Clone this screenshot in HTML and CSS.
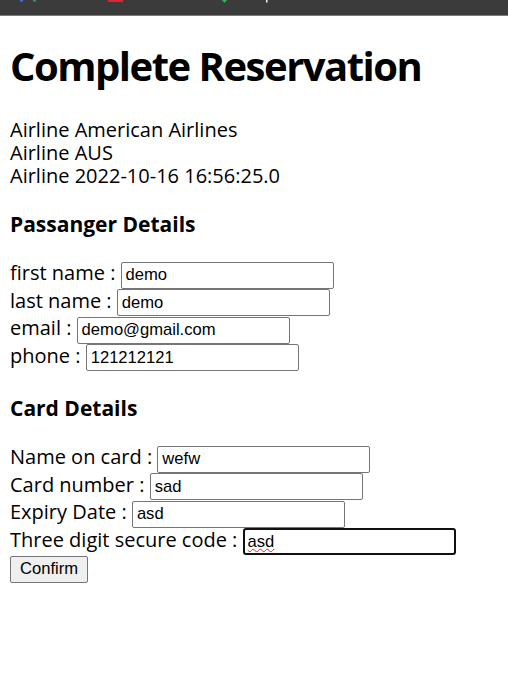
FILE: index.html
```html
<!DOCTYPE html>
<html lang="en">
<head>
<meta charset="utf-8">
<title>Complete Reservation</title>
<link rel="stylesheet" href="styles.css">
</head>
<body>
<div class="topbar">
  <svg class="topbar-icons" width="508" height="15" viewBox="0 0 508 15">
    <rect x="20" y="0" width="3" height="1.5" fill="#3b78d8"/>
    <rect x="33" y="0" width="3" height="1.5" fill="#2e9e48"/>
    <rect x="108" y="0" width="15" height="2" fill="#e0262a"/>
    <path d="M222 0 L227 0 L224.5 3 Z" fill="#34b255"/>
    <rect x="266" y="0" width="1.5" height="2.5" fill="#f2f2f2"/>
  </svg>
</div>
<main class="page">
  <h1 class="title">Complete Reservation</h1>
  <p class="flight">Airline American Airlines
Airline AUS
Airline 2022-10-16 16:56:25.0</p>
  <form class="form">
    <h3 class="section-title">Passanger Details</h3>
    <div class="row">first name : <input class="field" type="text" value="demo"></div>
    <div class="row">last name : <input class="field" type="text" value="demo"></div>
    <div class="row">email : <input class="field" type="text" value="demo@gmail.com"></div>
    <div class="row">phone : <input class="field" type="text" value="121212121"></div>

    <h3 class="section-title">Card Details</h3>
    <div class="row">Name on card : <input class="field" type="text" value="wefw"></div>
    <div class="row">Card number : <input class="field" type="text" value="sad"></div>
    <div class="row">Expiry Date : <input class="field" type="text" value="asd"></div>
    <div class="row">Three digit secure code : <span class="field field-focus"><span class="misspelled">asd</span></span></div>
    <button class="confirm" type="button">Confirm</button>
  </form>
</main>
</body>
</html>
```
FILE: styles.css
```css
html, body {
  margin: 0;
  padding: 0;
  background: #ffffff;
}

body {
  font-family: "Open Sans", "Noto Sans", sans-serif;
  font-size: 20px;
  line-height: 23px;
  color: #000000;
}

.topbar {
  height: 15px;
  background: #3b3b3b;
  border-bottom: 1px solid #7c7c7c;
}

.topbar-icons {
  display: block;
}

.page {
  padding: 0 10px;
}

.title {
  font-size: 40px;
  line-height: 46px;
  font-weight: 700;
  letter-spacing: -1.5px;
  margin: 27px 0 29px;
}

.flight {
  margin: 0;
  line-height: 23px;
  white-space: pre-line;
}

.form {
  margin: 0;
}

.section-title {
  font-size: 21px;
  line-height: 24px;
  font-weight: 700;
  margin: 25px 0 25px;
}

.row {
  line-height: 23px;
  white-space: nowrap;
}

.field {
  display: inline-block;
  box-sizing: border-box;
  width: 213px;
  height: 27px;
  margin: 0;
  padding: 0 4px;
  border: 1px solid #767676;
  border-radius: 2px;
  background: #ffffff;
  font-family: "Liberation Sans", Arial, sans-serif;
  font-size: 16.6px;
  line-height: 25px;
  color: #000000;
  vertical-align: baseline;
  outline: none;
}

.field-focus {
  border: 2px solid #101010;
  border-radius: 3px;
  padding: 0 3px;
  line-height: 23px;
}

.misspelled {
  text-decoration: underline wavy #e0262a;
  text-decoration-thickness: 1px;
  text-decoration-skip-ink: none;
  text-underline-offset: 1px;
}

.confirm {
  display: block;
  box-sizing: border-box;
  height: 27px;
  margin: 1px 0 0;
  padding: 0 9px;
  border: 1px solid #767676;
  border-radius: 2px;
  background: #efefef;
  font-family: "Liberation Sans", Arial, sans-serif;
  font-size: 16.6px;
  color: #000000;
}
```
